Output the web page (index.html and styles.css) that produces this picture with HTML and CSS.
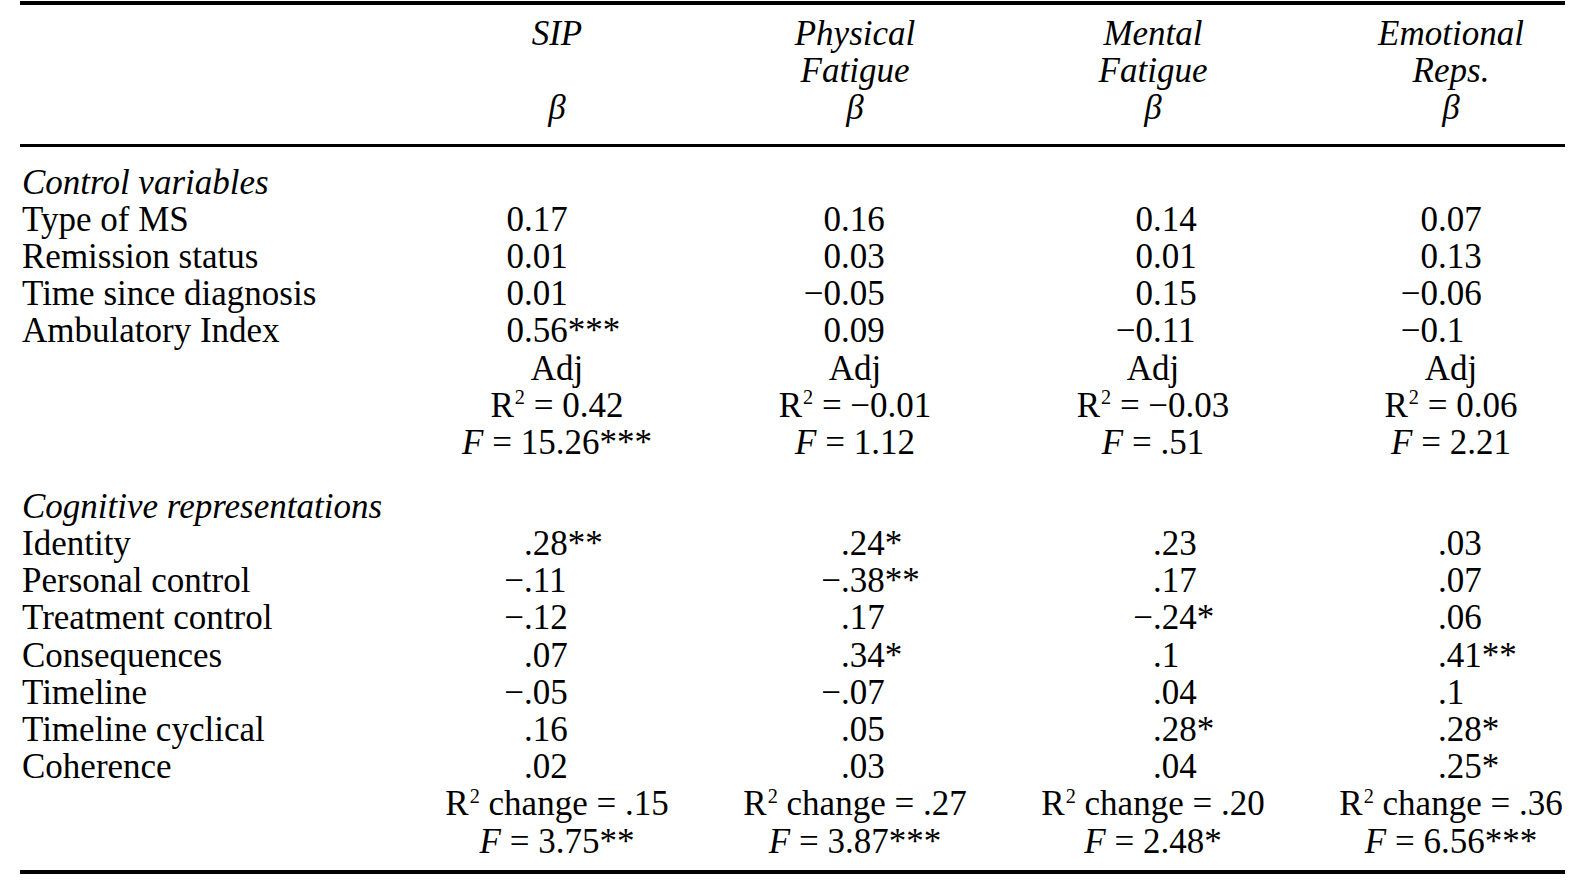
FILE: index.html
```html
<!DOCTYPE html>
<html lang="en">
<head>
<meta charset="utf-8">
<title>Regression table</title>
<link rel="stylesheet" href="styles.css">
</head>
<body>
<div class="table">
  <div class="row head">
    <div class="cell c0"></div>
    <div class="cell hc c1"><span>SIP</span><span>&nbsp;</span><span>β</span></div>
    <div class="cell hc c2"><span>Physical</span><span>Fatigue</span><span>β</span></div>
    <div class="cell hc c3"><span>Mental</span><span>Fatigue</span><span>β</span></div>
    <div class="cell hc c4"><span>Emotional</span><span>Reps.</span><span>β</span></div>
  </div>
  <div class="tbody">
    <div class="row"><div class="cell sect">Control variables</div></div>
    <div class="row">
      <div class="cell lab">Type of MS</div>
      <div class="cell num c1"><span class="i">0</span>.17</div>
      <div class="cell num c2"><span class="i">0</span>.16</div>
      <div class="cell num c3"><span class="i">0</span>.14</div>
      <div class="cell num c4"><span class="i">0</span>.07</div>
    </div>
    <div class="row">
      <div class="cell lab">Remission status</div>
      <div class="cell num c1"><span class="i">0</span>.01</div>
      <div class="cell num c2"><span class="i">0</span>.03</div>
      <div class="cell num c3"><span class="i">0</span>.01</div>
      <div class="cell num c4"><span class="i">0</span>.13</div>
    </div>
    <div class="row">
      <div class="cell lab">Time since diagnosis</div>
      <div class="cell num c1"><span class="i">0</span>.01</div>
      <div class="cell num c2"><span class="i">−0</span>.05</div>
      <div class="cell num c3"><span class="i">0</span>.15</div>
      <div class="cell num c4"><span class="i">−0</span>.06</div>
    </div>
    <div class="row">
      <div class="cell lab">Ambulatory Index</div>
      <div class="cell num c1"><span class="i">0</span>.56***</div>
      <div class="cell num c2"><span class="i">0</span>.09</div>
      <div class="cell num c3"><span class="i">−0</span>.11</div>
      <div class="cell num c4"><span class="i">−0</span>.1</div>
    </div>
    <div class="row">
      <div class="cell lab"></div>
      <div class="cell ctr c1">Adj</div>
      <div class="cell ctr c2">Adj</div>
      <div class="cell ctr c3">Adj</div>
      <div class="cell ctr c4">Adj</div>
    </div>
    <div class="row">
      <div class="cell lab"></div>
      <div class="cell ctr c1">R<sup>2</sup> = 0.42</div>
      <div class="cell ctr c2">R<sup>2</sup> = −0.01</div>
      <div class="cell ctr c3">R<sup>2</sup> = −0.03</div>
      <div class="cell ctr c4">R<sup>2</sup> = 0.06</div>
    </div>
    <div class="row">
      <div class="cell lab"></div>
      <div class="cell ctr c1"><i>F</i> = 15.26***</div>
      <div class="cell ctr c2"><i>F</i> = 1.12</div>
      <div class="cell ctr c3"><i>F</i> = .51</div>
      <div class="cell ctr c4"><i>F</i> = 2.21</div>
    </div>
    <div class="row gap"><div class="cell sect">Cognitive representations</div></div>
    <div class="row">
      <div class="cell lab">Identity</div>
      <div class="cell num c1"><span class="i"></span>.28**</div>
      <div class="cell num c2"><span class="i"></span>.24*</div>
      <div class="cell num c3"><span class="i"></span>.23</div>
      <div class="cell num c4"><span class="i"></span>.03</div>
    </div>
    <div class="row">
      <div class="cell lab">Personal control</div>
      <div class="cell num c1"><span class="i">−</span>.11</div>
      <div class="cell num c2"><span class="i">−</span>.38**</div>
      <div class="cell num c3"><span class="i"></span>.17</div>
      <div class="cell num c4"><span class="i"></span>.07</div>
    </div>
    <div class="row">
      <div class="cell lab">Treatment control</div>
      <div class="cell num c1"><span class="i">−</span>.12</div>
      <div class="cell num c2"><span class="i"></span>.17</div>
      <div class="cell num c3"><span class="i">−</span>.24*</div>
      <div class="cell num c4"><span class="i"></span>.06</div>
    </div>
    <div class="row">
      <div class="cell lab">Consequences</div>
      <div class="cell num c1"><span class="i"></span>.07</div>
      <div class="cell num c2"><span class="i"></span>.34*</div>
      <div class="cell num c3"><span class="i"></span>.1</div>
      <div class="cell num c4"><span class="i"></span>.41**</div>
    </div>
    <div class="row">
      <div class="cell lab">Timeline</div>
      <div class="cell num c1"><span class="i">−</span>.05</div>
      <div class="cell num c2"><span class="i">−</span>.07</div>
      <div class="cell num c3"><span class="i"></span>.04</div>
      <div class="cell num c4"><span class="i"></span>.1</div>
    </div>
    <div class="row">
      <div class="cell lab">Timeline cyclical</div>
      <div class="cell num c1"><span class="i"></span>.16</div>
      <div class="cell num c2"><span class="i"></span>.05</div>
      <div class="cell num c3"><span class="i"></span>.28*</div>
      <div class="cell num c4"><span class="i"></span>.28*</div>
    </div>
    <div class="row">
      <div class="cell lab">Coherence</div>
      <div class="cell num c1"><span class="i"></span>.02</div>
      <div class="cell num c2"><span class="i"></span>.03</div>
      <div class="cell num c3"><span class="i"></span>.04</div>
      <div class="cell num c4"><span class="i"></span>.25*</div>
    </div>
    <div class="row">
      <div class="cell lab"></div>
      <div class="cell ctr c1">R<sup>2</sup> change = .15</div>
      <div class="cell ctr c2">R<sup>2</sup> change = .27</div>
      <div class="cell ctr c3">R<sup>2</sup> change = .20</div>
      <div class="cell ctr c4">R<sup>2</sup> change = .36</div>
    </div>
    <div class="row">
      <div class="cell lab"></div>
      <div class="cell ctr c1"><i>F</i> = 3.75**</div>
      <div class="cell ctr c2"><i>F</i> = 3.87***</div>
      <div class="cell ctr c3"><i>F</i> = 2.48*</div>
      <div class="cell ctr c4"><i>F</i> = 6.56***</div>
    </div>
  </div>
</div>
</body>
</html>
```

FILE: styles.css
```css
html, body {
  margin: 0;
  padding: 0;
  background: #ffffff;
}

body {
  color: #000000;
  font-family: "Liberation Serif", "Times New Roman", serif;
  font-size: 35px;
}

.table {
  margin: 1px 0 0 20px;
  width: 1545px;
  border-top: 4px solid #000;
  border-bottom: 4px solid #000;
}

.row {
  display: grid;
  grid-template-columns: 388px 298px 298px 298px 263px;
  line-height: 37.2px;
  white-space: nowrap;
}

.head {
  padding: 10px 0 18px;
  border-bottom: 3px solid #000;
}

.hc {
  display: flex;
  flex-direction: column;
  align-items: center;
  font-style: italic;
  line-height: 37px;
}

.head .c4 {
  padding-left: 35px;
}

.tbody {
  padding: 16.5px 0 10.5px;
}

.gap {
  margin-top: 26.6px;
}

.sect {
  font-style: italic;
  padding-left: 2px;
  grid-column: 1 / -1;
}

.lab {
  padding-left: 2px;
}

.ctr {
  text-align: center;
}

.ctr.c4 {
  padding-left: 35px;
}

.num .i {
  display: inline-block;
  width: 60px;
  text-align: right;
}

.num.c1 { padding-left: 56px; }
.num.c2 { padding-left: 75px; }
.num.c3 { padding-left: 89px; }
.num.c4 { padding-left: 76px; }

sup {
  font-size: 0.58em;
  line-height: 0;
  vertical-align: 0.62em;
  padding-left: 1px;
}
```
